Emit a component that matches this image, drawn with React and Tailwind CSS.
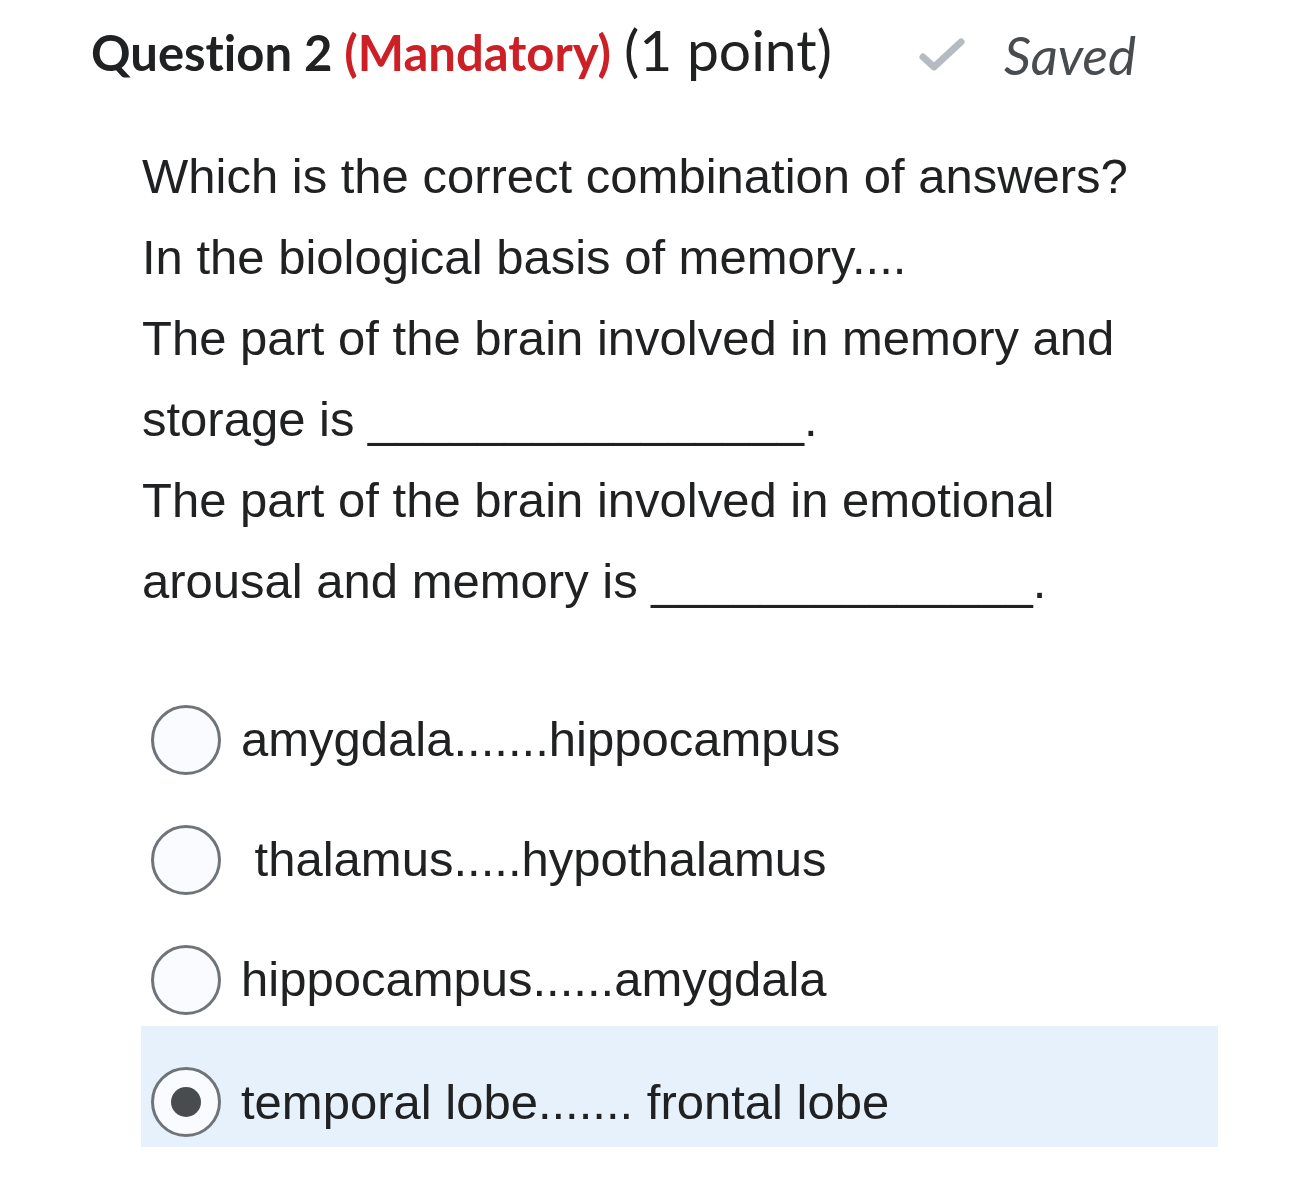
import React from 'react';

const options = [
  { label: 'amygdala.......hippocampus', selected: false },
  { label: '\u00a0thalamus.....hypothalamus', selected: false },
  { label: 'hippocampus......amygdala', selected: false },
  { label: 'temporal lobe....... frontal lobe', selected: true },
];

const Radio = ({ checked }) => (
  <span className="flex h-[70px] w-[70px] shrink-0 items-center justify-center rounded-full border-[3px] border-[#6f7478] bg-[#f9fbff]">
    {checked && <span className="h-[30px] w-[30px] rounded-full bg-[#494c4f]" />}
  </span>
);

const App = () => {
  return (
    <div className="min-h-[1190px] w-[1290px] bg-white text-[#202122]">
      {/* header */}
      <div className="flex items-baseline pl-[91px] pt-[15px] font-['Lato',sans-serif] [font-variant-ligatures:none]">
        <h2 className="text-[49px] font-bold leading-[1.2]">
          Question 2 <span className="text-[#cd2026]">(Mandatory)</span>
        </h2>
        <span className="ml-[13px] text-[57px] leading-[1.2]">(1 point)</span>
        <span className="ml-[86px] flex items-center self-center">
          <svg width="48" height="36" viewBox="0 0 48 36" className="mt-[8px]">
            <path d="M5 20 L16 30 L43 5" fill="none" stroke="#b5bbc0" strokeWidth="7" strokeLinecap="round" strokeLinejoin="round" />
          </svg>
          <span className="ml-[38px] mt-[8px] text-[53px] italic leading-[1.2] text-[#494c4f]">Saved</span>
        </span>
      </div>

      {/* question body */}
      <div className="pl-[142px] pt-[49px] font-['Liberation_Sans',Arial,sans-serif] text-[49px] leading-[81px]">
        <p>Which is the correct combination of answers?</p>
        <p>In the biological basis of memory....</p>
        <p>The part of the brain involved in memory and</p>
        <p>storage is ________________.</p>
        <p>The part of the brain involved in emotional</p>
        <p>arousal and memory is ______________.</p>
      </div>

      {/* options */}
      <div className="mt-[44px] pl-[141px] font-['Liberation_Sans',Arial,sans-serif] text-[49px]">
        {options.map((o, i) => (
          <label
            key={i}
            className={`flex w-[1077px] items-center gap-[20px] pl-[10px] ${o.selected ? 'h-[121px] pt-[32px] bg-[#e7f1fc]' : 'h-[120px] pt-[28px]'}`}
          >
            <Radio checked={o.selected} />
            <span className="whitespace-pre leading-none">{o.label}</span>
          </label>
        ))}
      </div>
    </div>
  );
};

export default App;
